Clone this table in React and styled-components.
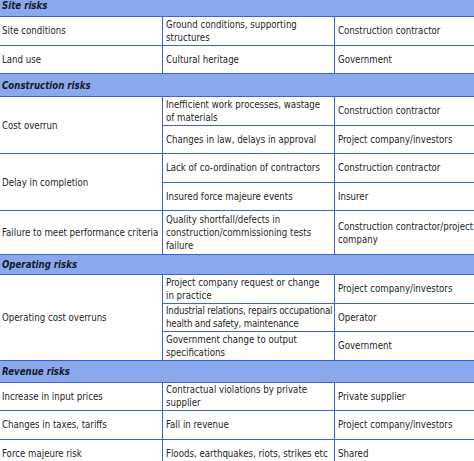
import React from 'react';
import styled, { createGlobalStyle } from 'styled-components';

const GlobalStyle = createGlobalStyle`
  html, body {
    margin: 0;
    padding: 0;
    background: #ffffff;
  }
`;

const Frame = styled.div`
  width: 474px;
  height: 461px;
  overflow: hidden;
  background: #fff;
`;

const Table = styled.table`
  border-collapse: collapse;
  table-layout: fixed;
  width: 488px;
  margin: -6px 0 0 -2px;
  font-family: 'DejaVu Sans Condensed', 'DejaVu Sans', sans-serif;
  font-size: 9.6px;
  line-height: 13px;
  color: #262626;
`;

const Col = styled.col`
  width: ${(p) => p.$w}px;
`;

const SectionCell = styled.td`
  background: #8aa8ec;
  border: 1px solid #3f62d2;
  height: ${(p) => p.$h}px;
  padding: 0 3px;
  box-sizing: border-box;
  font-weight: bold;
  font-style: italic;
  color: #141a2e;
  vertical-align: middle;
`;

const Cell = styled.td`
  border: 1px solid #3f62d2;
  padding: 0 3px;
  height: ${(p) => p.$h || 28.5}px;
  box-sizing: border-box;
  vertical-align: middle;
  white-space: pre;
  letter-spacing: ${(p) => (p.$tight ? '-0.18px' : 'normal')};
`;

const sections = [
  {
    title: 'Site risks',
    h: 22,
    rows: [
      { risk: 'Site conditions', items: [['Ground conditions, supporting\nstructures', 'Construction contractor']] },
      { risk: 'Land use', items: [['Cultural heritage', 'Government']] },
    ],
  },
  {
    title: 'Construction risks',
    h: 23,
    rows: [
      {
        risk: 'Cost overrun',
        items: [
          ['Inefficient work processes, wastage\nof materials', 'Construction contractor'],
          ['Changes in law, delays in approval', 'Project company/investors'],
        ],
      },
      {
        risk: 'Delay in completion',
        items: [
          ['Lack of co-ordination of contractors', 'Construction contractor'],
          ['Insured force majeure events', 'Insurer'],
        ],
      },
      {
        risk: 'Failure to meet performance criteria',
        h: 44,
        items: [['Quality shortfall/defects in\nconstruction/commissioning tests\nfailure', 'Construction contractor/project\ncompany']],
      },
    ],
  },
  {
    title: 'Operating risks',
    h: 20,
    rows: [
      {
        risk: 'Operating cost overruns',
        items: [
          ['Project company request or change\nin practice', 'Project company/investors'],
          ['Industrial relations, repairs occupational\nhealth and safety, maintenance', 'Operator', true],
          ['Government change to output\nspecifications', 'Government'],
        ],
      },
    ],
  },
  {
    title: 'Revenue risks',
    h: 22,
    rows: [
      { risk: 'Increase in input prices', items: [['Contractual violations by private\nsupplier', 'Private supplier']] },
      { risk: 'Changes in taxes, tariffs', items: [['Fall in revenue', 'Project company/investors']] },
      { risk: 'Force majeure risk', items: [['Floods, earthquakes, riots, strikes etc', 'Shared']] },
    ],
  },
];

export default function App() {
  return (
    <Frame>
      <GlobalStyle />
      <Table>
        <colgroup>
          <Col $w={164} />
          <Col $w={172} />
          <Col $w={152} />
        </colgroup>
        <tbody>
          {sections.map((s) => (
            <React.Fragment key={s.title}>
              <tr>
                <SectionCell colSpan={3} $h={s.h}>{s.title}</SectionCell>
              </tr>
              {s.rows.map((r) =>
                r.items.map((it, i) => (
                  <tr key={r.risk + i}>
                    {i === 0 && <Cell rowSpan={r.items.length}>{r.risk}</Cell>}
                    <Cell $h={r.h} $tight={it[2]}>{it[0]}</Cell>
                    <Cell $h={r.h}>{it[1]}</Cell>
                  </tr>
                ))
              )}
            </React.Fragment>
          ))}
        </tbody>
      </Table>
    </Frame>
  );
}
